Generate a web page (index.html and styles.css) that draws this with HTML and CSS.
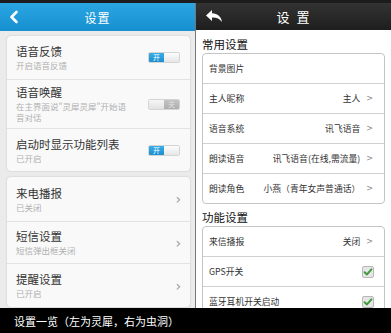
FILE: index.html
```html
<!DOCTYPE html>
<html lang="zh">
<head>
  <meta charset="UTF-8" />
  <title>设置一览</title>
  <link rel="stylesheet" href="styles.css">
</head>
<body>
  <div class="shot">
    <div class="status-strip"></div>

    <div class="panes">
      <!-- 灵犀 -->
      <section class="lx">
        <header class="lx-head">
          <svg class="lx-back" width="10" height="14" viewBox="0 0 10 14">
            <polyline points="7.5,2 2.5,7 7.5,12" fill="none" stroke="#fff" stroke-width="2.6" stroke-linecap="round" stroke-linejoin="round"/>
          </svg>
          <h1>设置</h1>
        </header>

        <div class="lx-body">
          <div class="lx-card">
            <div class="lx-row r1">
              <div class="lx-text">
                <div class="lx-title">语音反馈</div>
                <div class="lx-sub">开启语音反馈</div>
              </div>
              <span class="toggle on"><i>开</i><b></b></span>
            </div>
            <div class="lx-row r2">
              <div class="lx-text">
                <div class="lx-title">语音唤醒</div>
                <div class="lx-sub">在主界面说"灵犀灵犀"开始语<br>音对话</div>
              </div>
              <span class="toggle off"><b></b><i>关</i></span>
            </div>
            <div class="lx-row r1">
              <div class="lx-text">
                <div class="lx-title">启动时显示功能列表</div>
                <div class="lx-sub">已开启</div>
              </div>
              <span class="toggle on"><i>开</i><b></b></span>
            </div>
          </div>

          <div class="lx-card">
            <div class="lx-row r4">
              <div class="lx-text">
                <div class="lx-title">来电播报</div>
                <div class="lx-sub">已关闭</div>
              </div>
              <span class="lx-arrow">›</span>
            </div>
            <div class="lx-row r5">
              <div class="lx-text">
                <div class="lx-title">短信设置</div>
                <div class="lx-sub">短信弹出框关闭</div>
              </div>
              <span class="lx-arrow">›</span>
            </div>
            <div class="lx-row r4">
              <div class="lx-text">
                <div class="lx-title">提醒设置</div>
                <div class="lx-sub">已开启</div>
              </div>
              <span class="lx-arrow">›</span>
            </div>
          </div>
        </div>
      </section>

      <!-- 虫洞 -->
      <section class="ch">
        <header class="ch-head">
          <svg class="ch-back" width="18" height="14" viewBox="0 0 18 14">
            <path d="M7 1 L1 6.5 L7 12 V8.6 C11.5 8.4 14.5 9.6 17 13 C16.2 7.6 12.8 4.6 7 4.3 Z" fill="#fff"/>
          </svg>
          <h1>设置</h1>
        </header>

        <div class="ch-body">
          <h2>常用设置</h2>
          <div class="ch-card">
            <div class="ch-row"><span>背景图片</span></div>
            <div class="ch-row"><span>主人昵称</span><em>主人</em><i class="ch-arrow">&gt;</i></div>
            <div class="ch-row"><span>语音系统</span><em>讯飞语音</em><i class="ch-arrow">&gt;</i></div>
            <div class="ch-row"><span>朗读语音</span><em>讯飞语音(在线,需流量)</em><i class="ch-arrow">&gt;</i></div>
            <div class="ch-row"><span>朗读角色</span><em>小燕（青年女声普通话）</em><i class="ch-arrow">&gt;</i></div>
          </div>

          <h2 class="tight">功能设置</h2>
          <div class="ch-card">
            <div class="ch-row"><span>来信播报</span><em>关闭</em><i class="ch-arrow">&gt;</i></div>
            <div class="ch-row"><span>GPS开关</span><em></em>
              <svg class="check" width="12" height="12" viewBox="0 0 12 12">
                <rect x="0.5" y="0.5" width="11" height="11" rx="1.5" fill="#e6e6e6" stroke="#b8b8b8"/>
                <polyline points="2.6,6.2 5,8.4 9.4,3.4" fill="none" stroke="#3f9a3c" stroke-width="2" stroke-linecap="round" stroke-linejoin="round"/>
              </svg>
            </div>
            <div class="ch-row"><span>蓝牙耳机开关启动</span><em></em>
              <svg class="check" width="12" height="12" viewBox="0 0 12 12">
                <rect x="0.5" y="0.5" width="11" height="11" rx="1.5" fill="#e6e6e6" stroke="#b8b8b8"/>
                <polyline points="2.6,6.2 5,8.4 9.4,3.4" fill="none" stroke="#3f9a3c" stroke-width="2" stroke-linecap="round" stroke-linejoin="round"/>
              </svg>
            </div>
          </div>
        </div>
      </section>
    </div>

    <div class="caption">设置一览（左为灵犀，右为虫洞）</div>
  </div>
</body>
</html>
```

FILE: styles.css
```css
* {
  box-sizing: border-box;
}

body {
  margin: 0;
  background: #000;
  font-family: "Noto Sans CJK SC", "Noto Sans", sans-serif;
}

.shot {
  width: 391px;
  height: 333px;
  display: flex;
  flex-direction: column;
  overflow: hidden;
}

.status-strip {
  height: 3px;
  background: #1c1c1c;
  flex: none;
}

.panes {
  flex: 1;
  display: flex;
  min-height: 0;
}

/* ---------- left: 灵犀 ---------- */

.lx {
  width: 195px;
  display: flex;
  flex-direction: column;
  background: #ebebeb;
  overflow: hidden;
}

.lx-head {
  height: 28px;
  flex: none;
  position: relative;
  display: flex;
  align-items: center;
  justify-content: center;
  background: linear-gradient(to bottom, #2aa6e2, #178fd0);
}

.lx-back {
  position: absolute;
  left: 9px;
  top: 7px;
}

.lx-head h1 {
  margin: 0;
  font-size: 12px;
  font-weight: normal;
  color: #fff;
  letter-spacing: 1px;
}

.lx-body {
  padding: 5px 5px 0 7px;
  display: flex;
  flex-direction: column;
  gap: 6px;
}

.lx-card {
  background: #f9f9f9;
  border-radius: 4px;
  box-shadow: 0 0 2px rgba(0, 0, 0, 0.18);
}

.lx-row {
  display: flex;
  align-items: center;
  padding: 0 9px 0 9px;
  border-top: 1px solid #e2e2e2;
}

.lx-row:first-child {
  border-top: none;
}

.r1 { height: 43px; }
.r2 { height: 49px; }
.r4 { height: 44px; }
.r5 { height: 42px; }

.lx-text {
  flex: 1;
}

.lx-title {
  font-size: 11.5px;
  line-height: 15px;
  color: #333;
}

.lx-sub {
  font-size: 8.5px;
  line-height: 11px;
  color: #b0b0b0;
  margin-top: 1px;
}

.lx-arrow {
  color: #999;
  font-size: 14px;
  line-height: 1;
  font-family: "DejaVu Sans", sans-serif;
}

.toggle {
  display: flex;
  width: 32px;
  height: 11px;
  border-radius: 2px;
  overflow: hidden;
  border: 1px solid #d4d4d4;
  margin-right: 1px;
}

.toggle i,
.toggle b {
  flex: 1;
  display: flex;
  align-items: center;
  justify-content: center;
  font-style: normal;
  font-size: 7px;
  line-height: 1;
}

.toggle.on i {
  background: linear-gradient(to bottom, #3aaee6, #1b8fd0);
  color: #fff;
}

.toggle.on b {
  background: linear-gradient(to bottom, #fdfdfd, #e6e6e6);
}

.toggle.off b {
  background: linear-gradient(to bottom, #f6f6f6, #e2e2e2);
}

.toggle.off i {
  background: linear-gradient(to bottom, #c4c4c4, #adadad);
  color: #e0e0e0;
}

/* ---------- right: 虫洞 ---------- */

.ch {
  flex: 1;
  display: flex;
  flex-direction: column;
  background: #fff;
  border-left: 1px solid #777;
  overflow: hidden;
}

.ch-head {
  height: 27px;
  flex: none;
  position: relative;
  display: flex;
  align-items: center;
  justify-content: center;
  background: linear-gradient(to bottom, #333, #1e1e1e);
}

.ch-back {
  position: absolute;
  left: 9px;
  top: 6px;
}

.ch-head h1 {
  margin: 0 0 0 6px;
  font-size: 13px;
  font-weight: normal;
  color: #fff;
  letter-spacing: 7px;
}

.ch-body {
  padding: 0 6px 0 6px;
}

.ch-body h2 {
  margin: 0;
  height: 23px;
  display: flex;
  align-items: center;
  padding-top: 4px;
  font-size: 11.5px;
  font-weight: normal;
  color: #111;
}

.ch-body h2.tight {
  height: 22px;
}

.ch-card {
  border: 1px solid #c4c4c4;
  border-radius: 4px;
}

.ch-row {
  height: 30px;
  display: flex;
  align-items: center;
  padding: 0 11px 0 6px;
  border-top: 1px solid #d0d0d0;
  font-size: 8.8px;
  color: #333;
}

.ch-row:first-child {
  height: 29px;
  border-top: none;
}

.ch-row span {
  flex: none;
}

.ch-row em {
  flex: 1;
  text-align: right;
  font-style: normal;
}

.ch-arrow {
  font-style: normal;
  color: #888;
  margin-left: 6px;
  font-family: "DejaVu Sans", sans-serif;
  font-size: 8px;
}

.check {
  flex: none;
  margin-right: -1px;
}

/* ---------- caption ---------- */

.caption {
  height: 25px;
  flex: none;
  display: flex;
  align-items: center;
  padding-left: 14px;
  background: #000;
  color: #fff;
  font-size: 11px;
}
```
